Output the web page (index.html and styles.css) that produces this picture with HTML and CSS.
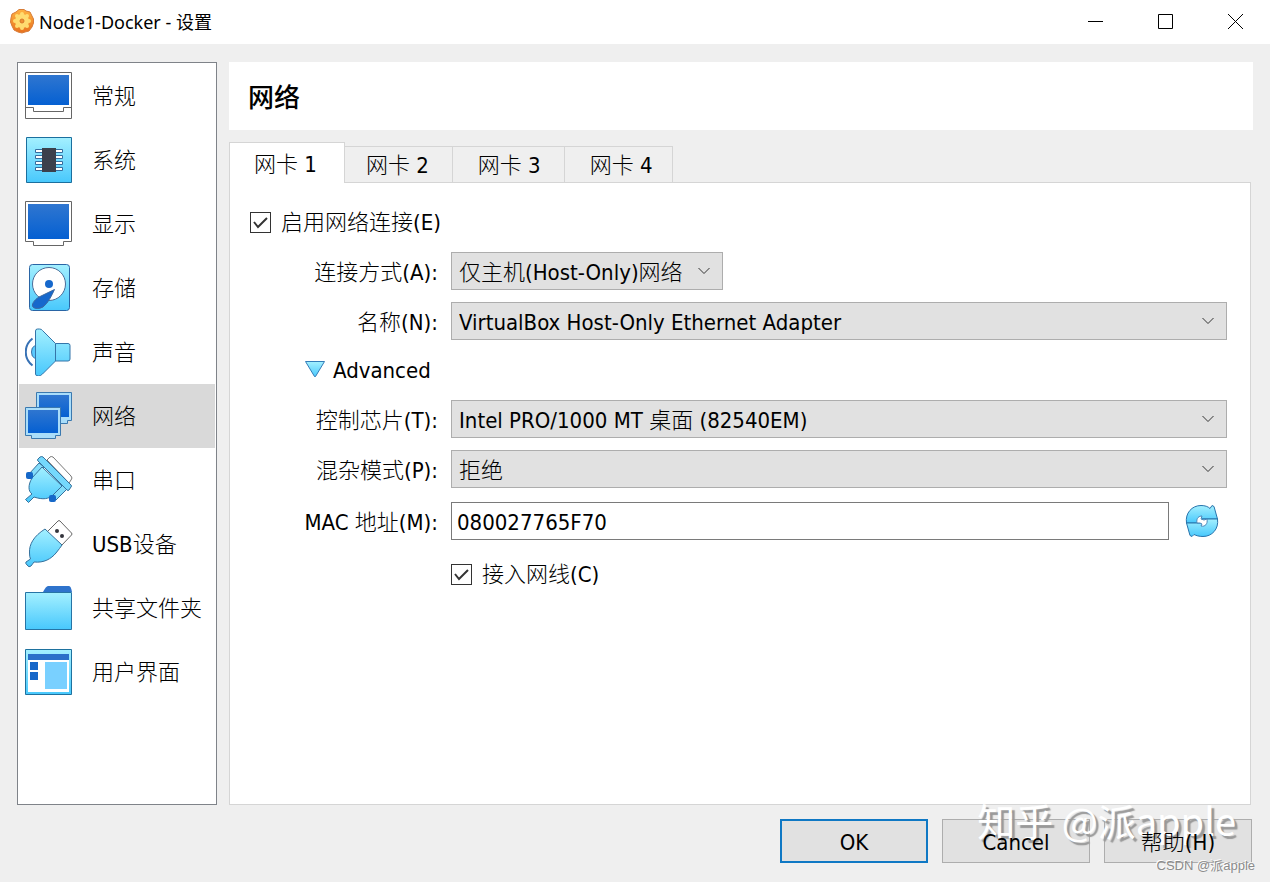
FILE: index.html
```html
<!DOCTYPE html>
<html lang="zh-CN">
<head>
<meta charset="utf-8">
<meta name="viewport" content="width=device-width, initial-scale=1">
<title>Node1-Docker - 设置</title>
<link rel="stylesheet" href="styles.css">
</head>
<body>
<svg class="defs" width="0" height="0" aria-hidden="true">
  <defs>
    <linearGradient id="cyan" x1="0" y1="0" x2="0" y2="1"><stop offset="0" stop-color="#a4f0ff"/><stop offset="1" stop-color="#48c8fc"/></linearGradient>
    <linearGradient id="blue" x1="0" y1="0" x2="0" y2="1"><stop offset="0" stop-color="#2f76d0"/><stop offset="1" stop-color="#0560d2"/></linearGradient>
    <linearGradient id="amber" x1="0" y1="0" x2="0" y2="1"><stop offset="0" stop-color="#ffb240"/><stop offset="1" stop-color="#e8711e"/></linearGradient>
  </defs>
</svg>
<div class="window">
  <header class="titlebar">
    <svg class="app-icon" width="26" height="26" viewBox="0 0 26 26" aria-hidden="true">
      <path d="M10 1.500h5l2 1.500 4 1 2 4 1.500 3v4L23 19l-3 4-4 1-3 1-4-1-4-2-2-4-1.500-4 .5-4L3 6l4-2z" fill="url(#amber)" stroke="#d77c38" stroke-linejoin="round"/>
      <g fill="#ffdc70"><circle cx="13" cy="13" r="7"/><circle cx="13" cy="6" r="2"/><circle cx="13" cy="20" r="2"/><circle cx="6" cy="13" r="2"/><circle cx="20" cy="13" r="2"/><circle cx="8" cy="8" r="2"/><circle cx="18" cy="8" r="2"/><circle cx="8" cy="18" r="2"/><circle cx="18" cy="18" r="2"/></g>
      <circle cx="13" cy="13" r="2" fill="#f09032" stroke="#d87828"/>
    </svg>
    <h1 class="title">Node1-Docker - 设置</h1>
    <div class="window-controls">
      <button type="button" aria-label="最小化"><svg width="16" height="16" viewBox="0 0 16 16"><path d="M1 7.500h15"/></svg></button>
      <button type="button" aria-label="最大化"><svg width="16" height="16" viewBox="0 0 16 16"><path d="M1.500.5h14v14h-14z"/></svg></button>
      <button type="button" aria-label="关闭"><svg width="16" height="16" viewBox="0 0 16 16"><path d="M1 0l15 15M16 0L1 15"/></svg></button>
    </div>
  </header>

  <div class="content">
    <nav class="sidebar" aria-label="设置分类">
      <a class="nav-item" href="#general"><svg class="nav-icon" viewBox="0 0 48 48"><path d="M.5.5h46v46H.5zM.5 35.500h8v4h30v-4h8" fill="#fff" stroke="#666"/><path d="M3 3h41v30H3z" fill="url(#blue)"/></svg><span>常规</span></a>
      <a class="nav-item" href="#system"><svg class="nav-icon" viewBox="0 0 48 48"><path d="M1.500 1.500h45v45h-45z" fill="url(#cyan)" stroke="#1b6f9e"/><g fill="#fff" stroke="#356d9f"><path d="M10.500 13.500h27v3h-27zM10.500 19.500h27v3h-27zM10.500 25.500h27v3h-27zM10.500 31.500h27v3h-27z"/></g><path d="M17 12h14v24H17z" fill="#3c404c"/></svg><span>系统</span></a>
      <a class="nav-item" href="#display"><svg class="nav-icon" viewBox="0 0 48 48"><path d="M.5 1.500h46v40h-8v4h-30v-4h-8z" fill="#fff" stroke="#666"/><path d="M3 4h41v35H3z" fill="url(#blue)"/></svg><span>显示</span></a>
      <a class="nav-item" href="#storage"><svg class="nav-icon" viewBox="0 0 48 48"><rect x="4.500" y=".5" width="40" height="46" rx="3" fill="url(#cyan)" stroke="#2a65a5"/><circle cx="24" cy="20" r="16.500" fill="#fff" stroke="#4a6d99"/><circle cx="24" cy="20" r="4" fill="#1668cc"/><path d="M29.500 25.500 14 33c-5 3-8 8-6 10s6 2 10 0c5-4 8-10 11.500-17.500z" fill="#1668cc" stroke="#3d69a0"/></svg><span>存储</span></a>
      <a class="nav-item" href="#audio"><svg class="nav-icon" viewBox="0 0 48 48"><path d="M7.500 10.500c-9 7-9 20 0 27" fill="none" stroke="#3872b5" stroke-width="2"/><path d="M10.500 18h-1q-3 1-3 6t3 6h1z" fill="#5bcbff" stroke="#3872a5"/><path d="M10.500 3q0-2 2-2h2q2 0 3 1.500l13 13H43q2 0 2 2V31q0 2-2 2H30.500l-13 13q-2 2-4 2-3 0-3-2zM30.500 15.500V33" fill="url(#cyan)" stroke="#3575a9"/></svg><span>声音</span></a>
      <a class="nav-item selected" href="#network" aria-current="page"><svg class="nav-icon" viewBox="0 0 48 48"><path d="M11.500.5h35v28h-4v3h-27v-3h-4z" fill="#a9ddfa" stroke="#3b79af"/><path d="M14 3h30v22H14z" fill="url(#blue)"/><path d="M.5 15.500h35v28h-5v3h-24v-3h-6z" fill="#a9ddfa" stroke="#3b79af"/><path d="M3 18h30v23H3z" fill="url(#blue)"/></svg><span>网络</span></a>
      <a class="nav-item" href="#serial"><svg class="nav-icon" viewBox="0 0 48 48"><path d="m22 4 3-3q1-1 3 0l18 19q2 2 0 4l-2 3z" fill="#fff" stroke="#777"/><path d="M4 18 14 7l5 4L9 23zM37 29l5 4-11 11-6-5z" fill="#84ddfa" stroke="#35719d" stroke-linejoin="round"/><path d="M17 11 7 22C3 29 3 35 7 38L.5 43.500l3 3L9 41c9 3 15 2 19-2l9-9z" fill="url(#cyan)" stroke="#35719d" stroke-linejoin="round"/><path d="M13 5q-1-1 0-2l2-2q2-1 3 0l28 28q1 1 0 2l-2 3q-1 1-2 0z" fill="#75d8fc" stroke="#35719d"/><rect x="1" y="16" width="7" height="7" rx="2" fill="#1668c8"/><rect x="24" y="39" width="7" height="7" rx="2" fill="#1668c8"/></svg><span>串口</span></a>
      <a class="nav-item" href="#usb"><svg class="nav-icon" viewBox="0 0 48 48"><path d="M22 12 33 1q1-1 2 0l11.500 12q1 1 0 2L36 26z" fill="#fff" stroke="#666"/><g fill="#33343b"><circle cx="32" cy="11" r="2"/><circle cx="37" cy="16" r="2"/></g><path d="M20 9C9 16 4 24 4.500 33q0 4 1 6L1 42q-1 1 1 3 2 3 4 1l3-4c10 1 17-3 22-9q4-5 6-8z" fill="url(#cyan)" stroke="#35719d" stroke-linejoin="round"/></svg><span>USB设备</span></a>
      <a class="nav-item" href="#shared"><svg class="nav-icon" viewBox="0 0 48 48"><path d="M18 8q3-6 5-6h21q2 0 3 6z" fill="#2e73cc"/><path d="M.5 8.500h46v37H.5z" fill="url(#cyan)" stroke="#2674a5"/></svg><span>共享文件夹</span></a>
      <a class="nav-item" href="#interface"><svg class="nav-icon" viewBox="0 0 48 48"><path d="M.5 1.500h46v45H.5z" fill="url(#cyan)" stroke="#1e729f"/><path d="M3 6h41v6H3z" fill="#2b70c9"/><path d="M3 12h41v32H3z" fill="#fff"/><path d="M5 14h8v8H5zM5 24h8v8H5z" fill="#1767c9"/><path d="M20 14h22v27H20z" fill="#79d0ff"/></svg><span>用户界面</span></a>
    </nav>

    <main class="main">
      <h2 class="page-heading">网络</h2>
      <div class="tabs" role="tablist">
        <button class="tab active" type="button" role="tab" aria-selected="true">网卡 1</button>
        <button class="tab" type="button" role="tab" aria-selected="false">网卡 2</button>
        <button class="tab" type="button" role="tab" aria-selected="false">网卡 3</button>
        <button class="tab" type="button" role="tab" aria-selected="false">网卡 4</button>
      </div>
      <form class="panel" id="settings">
        <label class="check"><span class="box"><input type="checkbox" checked><svg viewBox="0 0 21 21"><path d="m4 10 4 5 9-9"/></svg></span><span class="check-text">启用网络连接(E)</span></label>
        <div class="fields">
          <label class="field-label" for="attach">连接方式(A):</label>
          <div class="combo combo-short"><select id="attach"><option>仅主机(Host-Only)网络</option></select><svg viewBox="0 0 12 8"><path d="m.5 1 5.500 5.500L11.500 1"/></svg></div>
          <label class="field-label" for="name">名称(N):</label>
          <div class="combo"><select id="name"><option>VirtualBox Host-Only Ethernet Adapter</option></select><svg viewBox="0 0 12 8"><path d="m.5 1 5.500 5.500L11.500 1"/></svg></div>
          <button class="advanced" type="button" aria-expanded="true"><svg width="22" height="18" viewBox="0 0 22 18"><path d="M1.500.5h19l-9 15q-.5 1-1 0z" fill="url(#cyan)" stroke="#337cb9"/></svg><span class="check-text">Advanced</span></button>
          <label class="field-label" for="chip">控制芯片(T):</label>
          <div class="combo"><select id="chip"><option>Intel PRO/1000 MT 桌面 (82540EM)</option></select><svg viewBox="0 0 12 8"><path d="m.5 1 5.500 5.500L11.500 1"/></svg></div>
          <label class="field-label" for="promiscuous">混杂模式(P):</label>
          <div class="combo"><select id="promiscuous"><option>拒绝</option></select><svg viewBox="0 0 12 8"><path d="m.5 1 5.500 5.500L11.500 1"/></svg></div>
          <label class="field-label" for="mac">MAC 地址(M):</label>
          <div class="mac-row">
            <input id="mac" type="text" value="080027765F70">
            <button class="refresh" type="button" aria-label="刷新"><svg width="34" height="34" viewBox="0 0 34 34"><g fill="url(#cyan)" stroke="#2874ac" stroke-linejoin="round"><path d="M1.500 19C0 9 7 1.500 16 1.500c4 0 7 1 9 3l2-3 2 1 3.500 12.500H17V19z"/><path d="M32.500 15C34 25 27 32.500 18 32.500c-4 0-7-1-9-2l-2 2-2-1L1.500 19H17v-4z"/></g><path d="M12 19c-1-5 2-7 5-7l-1 3 3 1 3-1c1 5-2 8-6 7l1-2-2-1z" fill="#fff" stroke="#4a86ba"/></svg></button>
          </div>
          <label class="check cable"><span class="box"><input type="checkbox" checked><svg viewBox="0 0 21 21"><path d="m4 10 4 5 9-9"/></svg></span><span class="check-text">接入网线(C)</span></label>
        </div>
      </form>
    </main>
  </div>

  <footer class="actions">
    <button class="action primary" type="submit" form="settings"><span>OK</span></button>
    <button class="action" type="button"><span>Cancel</span></button>
    <button class="action" type="button"><span>帮助(H)</span></button>
    <span class="watermark-large">知乎 @派apple</span>
    <span class="watermark-small">CSDN @派apple</span>
  </footer>
</div>
</body>
</html>
```
FILE: styles.css
```css
* {
  box-sizing: border-box;
}

body {
  margin: 0;
  background: #efefef;
  color: #000;
  font: 300 22px/30px "DejaVu Sans Condensed", "Noto Sans CJK SC", sans-serif;
}

button,
input,
select {
  margin: 0;
  color: inherit;
  font: inherit;
}

.defs {
  position: absolute;
}

.window {
  display: flex;
  flex-direction: column;
  min-height: 100vh;
}

.titlebar {
  display: flex;
  align-items: center;
  gap: 4px;
  height: 44px;
  padding-left: 9px;
  background: #fff;
}

.app-icon {
  margin-bottom: 2px;
}

.title {
  margin: 0;
  font: 18px/28px "Noto Sans", "Noto Sans CJK SC", sans-serif;
}

.window-controls {
  display: flex;
  margin-left: auto;
}

.window-controls button {
  display: grid;
  place-items: center;
  width: 70px;
  height: 44px;
  padding: 0;
  border: 0;
  background: transparent;
}

.window-controls path {
  fill: none;
  stroke: #000;
}

.content {
  display: flex;
  flex: 1;
  gap: 12px;
  padding: 18px 17px 0;
}

.sidebar {
  flex: none;
  width: 200px;
  padding: 1px;
  border: 1px solid #7f8389;
  background: #fff;
}

.nav-item {
  display: flex;
  align-items: center;
  gap: 19px;
  height: 64px;
  padding-left: 6px;
  color: inherit;
  text-decoration: none;
  white-space: nowrap;
}

.nav-item span,
.check-text {
  padding-top: 2px;
}

.nav-item.selected {
  background: #d9d9d9;
}

.nav-icon {
  flex: none;
  width: 48px;
  height: 48px;
}

.main {
  display: flex;
  flex: 1;
  flex-direction: column;
  min-width: 0;
}

.page-heading {
  margin: 0 0 12px;
  padding: 20px 19px 16px;
  background: #fff;
  font-size: 26px;
  font-weight: 500;
  line-height: 32px;
}

.tabs {
  display: flex;
  align-items: flex-end;
  height: 40px;
}

.tab {
  height: 36px;
  padding: 3px 23px 0 25px;
  border: 1px solid #d5d5d5;
  border-width: 1px 1px 0 0;
  background: #efefef;
  white-space: nowrap;
}

.tab.active + .tab {
  padding-left: 21px;
}

.tab:last-child {
  padding-right: 19px;
}

.tab.active {
  z-index: 1;
  height: 41px;
  margin-bottom: -1px;
  padding: 3px 27px 0 24px;
  border-left-width: 1px;
  background: #fff;
}

.panel {
  flex: 1;
  margin-right: 2px;
  padding: 23px 23px 24px 20px;
  border: 1px solid #d5d5d5;
  background: #fff;
}

.check {
  display: flex;
  align-items: center;
  gap: 10px;
  width: max-content;
}

.box {
  display: grid;
  width: 21px;
  height: 21px;
}

.box > * {
  grid-area: 1 / 1;
}

.box input {
  width: 21px;
  height: 21px;
  border: 1px solid #333;
  background: #fff;
  appearance: none;
}

.box svg {
  z-index: 1;
  fill: none;
  stroke: #333;
  stroke-width: 2;
  pointer-events: none;
  visibility: hidden;
}

.box input:checked + svg {
  visibility: visible;
}

.fields {
  display: grid;
  grid-template-columns: 188px 1fr;
  gap: 12px 13px;
  align-items: center;
  margin-top: 14px;
}

.field-label {
  padding-top: 3px;
  text-align: right;
  white-space: nowrap;
}

.combo {
  position: relative;
  height: 38px;
}

.combo-short {
  width: 272px;
}

.combo select {
  display: block;
  width: 100%;
  height: 100%;
  padding: 3px 36px 0 7px;
  border: 1px solid #adadad;
  border-radius: 0;
  background: #e1e1e1;
  appearance: none;
}

.combo svg {
  position: absolute;
  top: 15px;
  right: 13px;
  width: 12px;
  height: 8px;
  fill: none;
  stroke: #333;
  pointer-events: none;
}

.advanced {
  display: flex;
  grid-column: 1 / -1;
  align-items: center;
  justify-self: start;
  gap: 7px;
  height: 36px;
  margin-left: 54px;
  padding: 0;
  border: 0;
  background: transparent;
}

.mac-row {
  display: flex;
  align-items: center;
  gap: 8px;
  height: 42px;
}

.mac-row input {
  flex: 1;
  min-width: 0;
  height: 38px;
  padding: 2px 5px 0;
  border: 1px solid #7a7a7a;
  background: #fff;
}

.refresh {
  display: grid;
  place-items: center;
  width: 50px;
  height: 42px;
  padding: 0;
  border: 0;
  background: transparent;
}

.cable {
  grid-column: 2;
  height: 40px;
}

.actions {
  position: relative;
  display: flex;
  justify-content: flex-end;
  gap: 14px;
  padding: 14px 18px 19px;
}

.action {
  width: 148px;
  height: 44px;
  padding: 3px 0 0;
  border: 1px solid #adadad;
  background: #e1e1e1;
}

.action span {
  position: relative;
  z-index: 2;
}

.action.primary {
  border: 2px solid #0f78c4;
}

.watermark-large,
.watermark-small {
  position: absolute;
  z-index: 1;
  font-weight: 400;
  white-space: nowrap;
  pointer-events: none;
}

.watermark-large {
  top: -10px;
  right: 34px;
  color: #fff;
  font-family: "Noto Sans CJK SC", sans-serif;
  font-size: 38px;
  line-height: 50px;
  text-shadow: 3px 3px 1px #999;
}

.watermark-small {
  right: 15px;
  bottom: 6px;
  color: #8b8b8b;
  font-family: "Liberation Sans", "Noto Sans CJK SC", sans-serif;
  font-size: 13px;
  line-height: 20px;
  text-shadow: -1px -1px 0 #fff;
}
```
